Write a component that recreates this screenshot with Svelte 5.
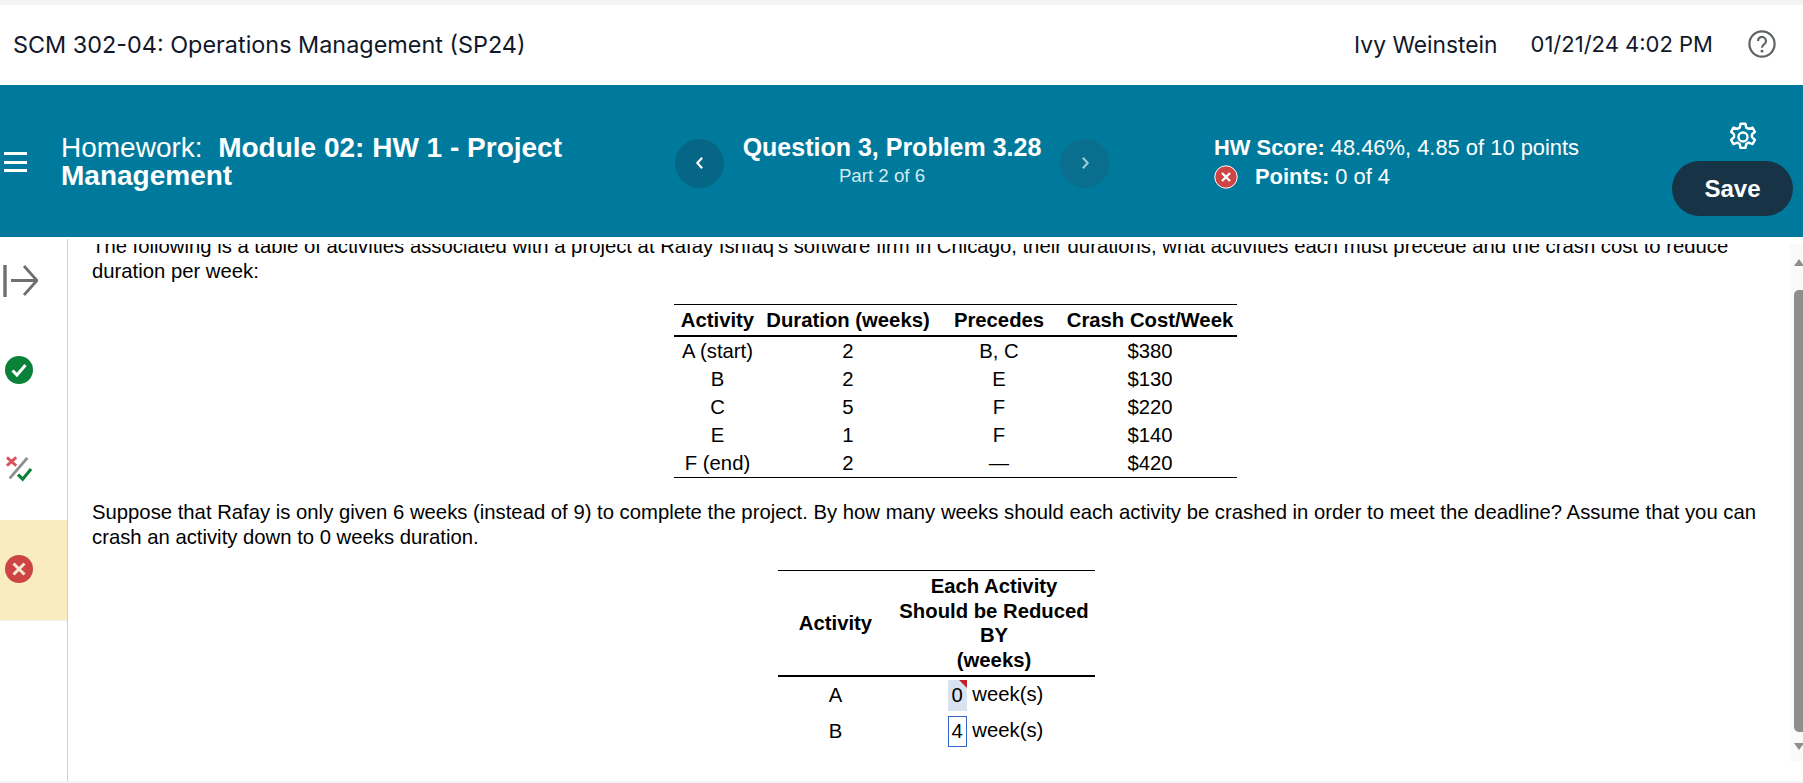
<script lang="ts">
  const activities = [
    { name: 'A (start)', duration: '2', precedes: 'B, C', cost: '$380' },
    { name: 'B', duration: '2', precedes: 'E', cost: '$130' },
    { name: 'C', duration: '5', precedes: 'F', cost: '$220' },
    { name: 'E', duration: '1', precedes: 'F', cost: '$140' },
    { name: 'F (end)', duration: '2', precedes: '—', cost: '$420' },
  ];
</script>

<div class="page">
  <header class="topbar">
    <div class="course">SCM 302-04: Operations Management (SP24)</div>
    <div class="user">Ivy Weinstein</div>
    <div class="date">01/21/24 4:02 PM</div>
    <svg class="help" viewBox="0 0 28 28" width="28" height="28" aria-hidden="true">
      <circle cx="14" cy="14" r="12.6" fill="none" stroke="#5f6364" stroke-width="2.2" />
      <path d="M10 11a4 4 0 1 1 6.300 3.200c-1.400 1-2.300 1.700-2.300 3.600" fill="none" stroke="#5f6364" stroke-width="2.200" />
      <circle cx="14" cy="21.200" r="1.400" fill="#5f6364" />
    </svg>
  </header>

  <section class="band">
    <button class="menu" type="button" aria-label="Menu"><span></span><span></span><span></span></button>
    <h1 class="title">Homework:&nbsp; <b>Module 02: HW 1 - Project Management</b></h1>
    <button class="nav" type="button" aria-label="Previous">
      <svg viewBox="0 0 10 16" width="9" height="14"><path d="M8 2 2.500 8 8 14" fill="none" stroke="#fff" stroke-width="2.400" /></svg>
    </button>
    <div class="question">
      <div class="q-title">Question 3, Problem 3.28</div>
      <div class="q-part">Part 2 of 6</div>
    </div>
    <button class="nav next" type="button" aria-label="Next">
      <svg viewBox="0 0 10 16" width="9" height="14"><path d="M2 2 7.500 8 2 14" fill="none" stroke="#9ccbd8" stroke-width="2.400" /></svg>
    </button>
    <div class="score">
      <div><b>HW Score:</b> 48.46%, 4.85 of 10 points</div>
      <div class="points">
        <svg viewBox="0 0 24 24" width="24" height="24">
          <circle cx="12" cy="12" r="11.200" fill="#cc4444" stroke="#fff" stroke-width="1" />
          <path d="M8 8l8 8M16 8l-8 8" stroke="#fff" stroke-width="2.400" />
        </svg>
        <span><b>Points:</b> 0 of 4</span>
      </div>
    </div>
    <div class="actions">
      <svg class="gear" viewBox="0 0 24 24" width="34" height="34" fill="none" stroke="#fff" stroke-width="1.700" stroke-linejoin="round">
        <path d="M10.300 2.600h3.400l.6 2.800 1.700.9 2.700-1 1.700 3-2.100 1.900v1.900l2.100 1.900-1.700 3-2.700-1-1.700.9-.6 2.800h-3.400l-.6-2.800-1.700-.9-2.700 1-1.700-3 2.100-1.900v-1.900L3.600 8.300l1.700-3 2.700 1 1.700-.9z" />
        <circle cx="12" cy="12" r="3.200" />
      </svg>
      <button class="save" type="button">Save</button>
    </div>
  </section>

  <main class="body">
    <aside class="rail">
      <div class="rail-item expand">
        <svg viewBox="0 0 36 34" width="36" height="34" fill="none" stroke="#6c7071">
          <path d="M3 1v32" stroke-width="3.400" />
          <path d="M9 16.500h25M22 2l13 14.500L22 31" stroke-width="2.800" />
        </svg>
      </div>
      <div class="rail-item check">
        <svg viewBox="0 0 28 28" width="28" height="28">
          <circle cx="14" cy="14" r="14" fill="#0a8138" />
          <path d="M7.500 14.500l4.500 4.500 8.500-10" fill="none" stroke="#fff" stroke-width="3" />
        </svg>
      </div>
      <div class="rail-item mixed">
        <svg viewBox="0 0 28 28" width="26" height="26" fill="none">
          <path d="M1 1.500l10 9M11 1.500l-10 9" stroke="#d9545a" stroke-width="3.200" />
          <path d="M4 24 23 2" stroke="#8a8c8e" stroke-width="3" />
          <path d="M13 20l5 5 9-11" stroke="#0a8138" stroke-width="3.400" />
        </svg>
      </div>
      <div class="rail-item current">
        <svg viewBox="0 0 28 28" width="28" height="28">
          <circle cx="14" cy="14" r="14" fill="#cc4444" />
          <path d="M8.500 8.500l11 11M19.500 8.500l-11 11" stroke="#fbe9cf" stroke-width="3" />
        </svg>
      </div>
    </aside>

    <div class="content">
      <div class="scroll-inner">
        <p>The following is a table of activities associated with a project at Rafay Ishfaq's software firm in Chicago, their durations, what activities each must precede and the crash cost to reduce duration per week:</p>

        <table class="activities">
          <thead>
            <tr>
              <th class="c1">Activity</th>
              <th class="c2">Duration (weeks)</th>
              <th class="c3">Precedes</th>
              <th class="c4">Crash Cost/Week</th>
            </tr>
          </thead>
          <tbody>
            {#each activities as row}
              <tr>
                <td>{row.name}</td>
                <td>{row.duration}</td>
                <td>{row.precedes}</td>
                <td>{row.cost}</td>
              </tr>
            {/each}
          </tbody>
        </table>

        <p class="second">Suppose that Rafay is only given 6 weeks (instead of 9) to complete the project. By how many weeks should each activity be crashed in order to meet the deadline? Assume that you can crash an activity down to 0 weeks duration.</p>

        <table class="answers">
          <thead>
            <tr>
              <th class="a1">Activity</th>
              <th class="a2">Each Activity<br />Should be Reduced<br />BY<br />(weeks)</th>
            </tr>
          </thead>
          <tbody>
            <tr>
              <td>A</td>
              <td class="answer"><span class="field wrong">0</span> week(s)</td>
            </tr>
            <tr>
              <td>B</td>
              <td class="answer"><span class="field active">4</span> week(s)</td>
            </tr>
          </tbody>
        </table>
      </div>
    </div>

    <div class="scrollbar" aria-hidden="true">
      <span class="tri up"></span>
      <span class="thumb"></span>
      <span class="tri down"></span>
    </div>
  </main>
</div>

<style>
  :global(body) {
    margin: 0;
    background: #f4f4f4;
  }

  .page {
    height: 783px;
    padding: 5px 0 2px;
    box-sizing: border-box;
    display: flex;
    flex-direction: column;
    overflow: hidden;
    font-family: "Liberation Sans", Arial, sans-serif;
    color: #000;
  }

  .topbar {
    height: 80px;
    flex: none;
    background: #fff;
    display: flex;
    align-items: center;
    font-family: Inter, "Liberation Sans", sans-serif;
    font-size: 23.400px;
    color: #11182a;
    padding: 0 27px 2px 13px;
    box-sizing: border-box;
  }

  .course {
    flex: 1;
  }

  .user {
    margin-right: 33px;
    font-size: 22.800px;
  }

  .date {
    margin-right: 35px;
    font-size: 22px;
  }

  .band {
    height: 152px;
    flex: none;
    background: #007a9c;
    color: #fff;
    display: flex;
    align-items: center;
    box-sizing: border-box;
    padding: 2px 10px 0 0;
  }

  .menu {
    width: 61px;
    flex: none;
    height: 20px;
    padding: 0 0 0 4px;
    border: 0;
    background: none;
    display: flex;
    flex-direction: column;
    justify-content: space-between;
    align-items: flex-start;
  }

  .menu span {
    display: block;
    width: 23px;
    height: 3px;
    background: #fff;
  }

  .title {
    width: 614px;
    flex: none;
    margin: 0;
    padding-right: 90px;
    box-sizing: border-box;
    font-size: 28px;
    line-height: 28px;
    font-weight: 400;
  }

  .nav {
    width: 49px;
    height: 49px;
    flex: none;
    padding: 0;
    border: 0;
    border-radius: 50%;
    background: #066686;
    display: flex;
    align-items: center;
    justify-content: center;
    margin-top: 2px;
  }

  .nav.next {
    width: 50px;
    background: #0a6f8f;
  }

  .question {
    width: 336px;
    flex: none;
    text-align: center;
    margin-top: -2px;
  }

  .q-title {
    font-size: 25px;
    font-weight: 700;
    line-height: 30px;
  }

  .q-part {
    font-size: 18.700px;
    line-height: 28px;
    color: #d5eaf0;
    padding-right: 20px;
  }

  .score {
    margin-left: 104px;
    flex: 1;
    font-size: 21.900px;
    line-height: 29px;
  }

  .points {
    display: flex;
    align-items: center;
    gap: 17px;
  }

  .actions {
    display: flex;
    flex-direction: column;
    align-items: flex-end;
    width: 121px;
    flex: none;
    gap: 7px;
    margin-top: 12px;
  }

  .gear {
    margin-right: 33px;
  }

  .save {
    width: 121px;
    height: 55px;
    border: 0;
    border-radius: 28px;
    background: #173447;
    color: #fff;
    font: 700 24px "Liberation Sans", Arial, sans-serif;
    padding: 0;
  }

  .body {
    flex: 1;
    min-height: 0;
    background: #fff;
    display: flex;
  }

  .rail {
    width: 68px;
    flex: none;
    box-sizing: border-box;
    margin-top: 2px;
    border-right: 1px solid #cfd0da;
    display: flex;
    flex-direction: column;
  }

  .rail-item {
    display: flex;
    align-items: center;
    padding-left: 5px;
    box-sizing: border-box;
  }

  .rail-item.expand {
    height: 83px;
    padding-left: 2px;
  }

  .rail-item.check {
    height: 96px;
  }

  .rail-item.mixed {
    height: 102px;
    padding-left: 6px;
  }

  .rail-item.current {
    height: 101px;
    padding-bottom: 3px;
    background: #f9ecbf;
    border-bottom: 1px solid #eeeeee;
  }

  .content {
    flex: 1;
    min-width: 0;
    overflow: hidden;
    margin-top: 7px;
    padding: 0 20px 0 24px;
  }

  .scroll-inner {
    margin-top: -10px;
  }

  p {
    margin: 0;
    font-size: 20.300px;
    line-height: 25px;
  }

  .activities {
    border-collapse: collapse;
    margin: 20px 0 0 582px;
    font-size: 20.300px;
    text-align: center;
    border-top: 1px solid #000;
    border-bottom: 1px solid #000;
  }

  .activities th {
    height: 30px;
    padding: 0;
    border-bottom: 2px solid #000;
    white-space: nowrap;
  }

  .activities td {
    height: 28px;
    padding: 0;
  }

  .c1 { width: 87px; }
  .c2 { width: 174px; }
  .c3 { width: 128px; }
  .c4 { width: 174px; }

  .second {
    margin-top: 22px;
  }

  .answers {
    border-collapse: collapse;
    margin: 20px 0 0 686px;
    font-size: 20.300px;
    text-align: center;
    border-top: 1px solid #000;
  }

  .answers th {
    padding: 3px 0;
    line-height: 24.500px;
    border-bottom: 2px solid #000;
  }

  .answers td {
    height: 36px;
    padding: 0;
  }

  .answers td.answer {
    padding-left: 3px;
  }

  .a1 { width: 115px; }
  .a2 { width: 202px; }

  .field {
    display: inline-block;
    box-sizing: border-box;
    width: 19px;
    height: 31px;
    line-height: 31px;
    vertical-align: middle;
    position: relative;
  }

  .field.wrong {
    background: #d9e2f1;
  }

  .field.wrong::after {
    content: "";
    position: absolute;
    top: 0;
    right: 0;
    border-style: solid;
    border-width: 0 8px 8px 0;
    border-color: transparent #c02026 transparent transparent;
  }

  .field.active {
    border: 1px solid #3366cc;
    line-height: 29px;
  }

  .scrollbar {
    width: 13px;
    flex: none;
    margin: 7px 0 20px;
    background: #fafafa;
    display: flex;
    flex-direction: column;
    align-items: flex-start;
    padding-left: 4px;
    box-sizing: border-box;
  }

  .thumb {
    flex: 1;
    width: 9px;
    border-radius: 5px 0 0 5px;
    background: #8e8e8e;
    margin: 24px 0 11px;
  }

  .tri {
    width: 0;
    height: 0;
    border-left: 5px solid transparent;
    border-right: 5px solid transparent;
  }

  .tri.up {
    margin-top: 15px;
    border-bottom: 7px solid #8e8e8e;
  }

  .tri.down {
    margin-bottom: 11px;
    border-top: 7px solid #8e8e8e;
  }
</style>
